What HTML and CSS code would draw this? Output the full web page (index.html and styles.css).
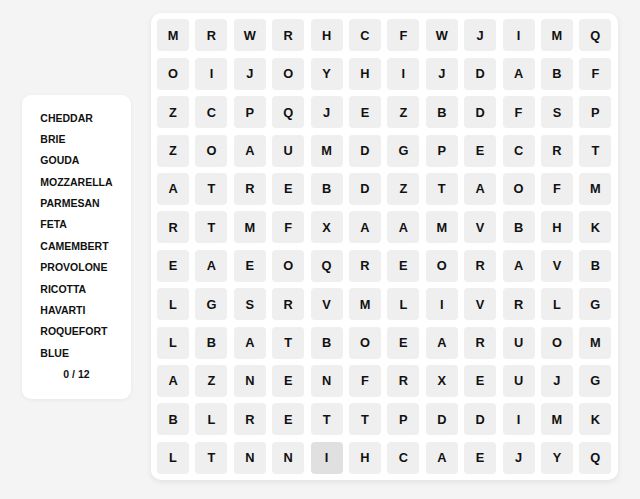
FILE: index.html
```html
<!DOCTYPE html>
<html>
<head>
<meta charset="utf-8">
<link rel="stylesheet" href="styles.css">
</head>
<body>
<div class="game">
  <div class="words">
    <div class="word">CHEDDAR</div>
    <div class="word">BRIE</div>
    <div class="word">GOUDA</div>
    <div class="word">MOZZARELLA</div>
    <div class="word">PARMESAN</div>
    <div class="word">FETA</div>
    <div class="word">CAMEMBERT</div>
    <div class="word">PROVOLONE</div>
    <div class="word">RICOTTA</div>
    <div class="word">HAVARTI</div>
    <div class="word">ROQUEFORT</div>
    <div class="word">BLUE</div>
    <div class="score">0 / 12</div>
  </div>
  <div class="board">
    <div class="cell">M</div><div class="cell">R</div><div class="cell">W</div><div class="cell">R</div><div class="cell">H</div><div class="cell">C</div><div class="cell">F</div><div class="cell">W</div><div class="cell">J</div><div class="cell">I</div><div class="cell">M</div><div class="cell">Q</div>
    <div class="cell">O</div><div class="cell">I</div><div class="cell">J</div><div class="cell">O</div><div class="cell">Y</div><div class="cell">H</div><div class="cell">I</div><div class="cell">J</div><div class="cell">D</div><div class="cell">A</div><div class="cell">B</div><div class="cell">F</div>
    <div class="cell">Z</div><div class="cell">C</div><div class="cell">P</div><div class="cell">Q</div><div class="cell">J</div><div class="cell">E</div><div class="cell">Z</div><div class="cell">B</div><div class="cell">D</div><div class="cell">F</div><div class="cell">S</div><div class="cell">P</div>
    <div class="cell">Z</div><div class="cell">O</div><div class="cell">A</div><div class="cell">U</div><div class="cell">M</div><div class="cell">D</div><div class="cell">G</div><div class="cell">P</div><div class="cell">E</div><div class="cell">C</div><div class="cell">R</div><div class="cell">T</div>
    <div class="cell">A</div><div class="cell">T</div><div class="cell">R</div><div class="cell">E</div><div class="cell">B</div><div class="cell">D</div><div class="cell">Z</div><div class="cell">T</div><div class="cell">A</div><div class="cell">O</div><div class="cell">F</div><div class="cell">M</div>
    <div class="cell">R</div><div class="cell">T</div><div class="cell">M</div><div class="cell">F</div><div class="cell">X</div><div class="cell">A</div><div class="cell">A</div><div class="cell">M</div><div class="cell">V</div><div class="cell">B</div><div class="cell">H</div><div class="cell">K</div>
    <div class="cell">E</div><div class="cell">A</div><div class="cell">E</div><div class="cell">O</div><div class="cell">Q</div><div class="cell">R</div><div class="cell">E</div><div class="cell">O</div><div class="cell">R</div><div class="cell">A</div><div class="cell">V</div><div class="cell">B</div>
    <div class="cell">L</div><div class="cell">G</div><div class="cell">S</div><div class="cell">R</div><div class="cell">V</div><div class="cell">M</div><div class="cell">L</div><div class="cell">I</div><div class="cell">V</div><div class="cell">R</div><div class="cell">L</div><div class="cell">G</div>
    <div class="cell">L</div><div class="cell">B</div><div class="cell">A</div><div class="cell">T</div><div class="cell">B</div><div class="cell">O</div><div class="cell">E</div><div class="cell">A</div><div class="cell">R</div><div class="cell">U</div><div class="cell">O</div><div class="cell">M</div>
    <div class="cell">A</div><div class="cell">Z</div><div class="cell">N</div><div class="cell">E</div><div class="cell">N</div><div class="cell">F</div><div class="cell">R</div><div class="cell">X</div><div class="cell">E</div><div class="cell">U</div><div class="cell">J</div><div class="cell">G</div>
    <div class="cell">B</div><div class="cell">L</div><div class="cell">R</div><div class="cell">E</div><div class="cell">T</div><div class="cell">T</div><div class="cell">P</div><div class="cell">D</div><div class="cell">D</div><div class="cell">I</div><div class="cell">M</div><div class="cell">K</div>
    <div class="cell">L</div><div class="cell">T</div><div class="cell">N</div><div class="cell">N</div><div class="cell hover">I</div><div class="cell">H</div><div class="cell">C</div><div class="cell">A</div><div class="cell">E</div><div class="cell">J</div><div class="cell">Y</div><div class="cell">Q</div>
  </div>
</div>
</body>
</html>
```
FILE: styles.css
```css
html, body {
  margin: 0;
  padding: 0;
  background: #f4f4f4;
  font-family: "Liberation Sans", Arial, sans-serif;
  color: #111;
}
body {
  height: 499px;
  overflow: hidden;
}
.game {
  display: flex;
  justify-content: center;
  align-items: center;
  gap: 20px;
  padding-top: 13px;
}
.words {
  background: #fff;
  border-radius: 9px;
  padding: 13px 18px;
  box-shadow: 0 1px 4px rgba(0,0,0,0.06);
  font-size: 10.5px;
  font-weight: bold;
}
.word {
  height: 21.4px;
  line-height: 21.4px;
  white-space: nowrap;
}
.score {
  height: 21.4px;
  line-height: 21.4px;
  text-align: center;
}
.board {
  background: #fff;
  border-radius: 10px;
  padding: 6.4px;
  box-shadow: 0 2px 6px rgba(0,0,0,0.08);
  display: grid;
  grid-template-columns: repeat(12, 32px);
  grid-auto-rows: 32px;
  gap: 6.4px;
}
.cell {
  background: #efefef;
  border-radius: 4px;
  display: flex;
  align-items: center;
  justify-content: center;
  font-size: 12.8px;
  font-weight: bold;
}
.cell.hover {
  background: #e0e0e0;
}
```
